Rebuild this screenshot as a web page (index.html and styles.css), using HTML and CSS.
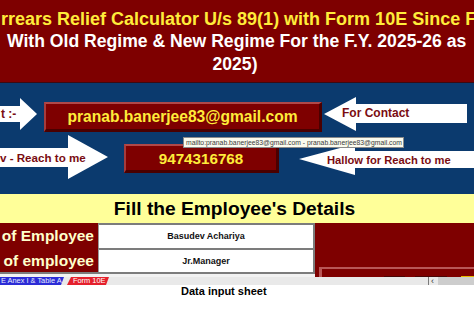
FILE: index.html
```html
<!DOCTYPE html>
<html>
<head>
<meta charset="utf-8">
<link rel="stylesheet" href="styles.css">
</head>
<body>
<div class="page">
  <header class="title">
    <div class="t1">rrears Relief Calculator U/s 89(1) with Form 10E Since F</div>
    <div class="t2">With Old Regime &amp; New Regime For the F.Y. 2025-26 as</div>
    <div class="t3">2025)</div>
  </header>
  <section class="contact">
    <div class="row row1">
      <div class="arrow a1"><span>t :-</span></div>
      <div class="box email">pranab.banerjee83@gmail.com</div>
      <div class="arrow a2"><span>For Contact</span></div>
    </div>
    <div class="row row2">
      <div class="arrow a3"><span>v - Reach to me</span></div>
      <div class="box phone">9474316768</div>
      <div class="arrow a4"><span>Hallow for Reach to me</span></div>
    </div>
    <div class="tooltip">mailto:pranab.banerjee83@gmail.com - pranab.banerjee83@gmail.com</div>
  </section>
  <div class="band">Fill the Employee's Details</div>
  <div class="grid">
    <div class="label">of Employee</div>
    <div class="cell">Basudev Achariya</div>
    <div class="side"><div class="side-box"><i class="blob dk"></i><i class="blob dk2"></i><i class="blob yl"></i></div></div>
    <div class="label">of employee</div>
    <div class="cell">Jr.Manager</div>
    <div class="blank"></div>
  </div>
  <div class="tabs">
    <span class="tab blue">E Anex I &amp; Table A</span>
    <span class="tab red">Form 10E</span>
    <span class="fill"></span>
    <span class="nav">&lsaquo;</span>
    <span class="track"></span>
  </div>
  <div class="caption">Data input sheet</div>
</div>
</body>
</html>
```

FILE: styles.css
```css
* { box-sizing: border-box; margin: 0; padding: 0; }
html, body { background: #ffffff; }
body { width: 474px; height: 312px; overflow: hidden; font-family: "Liberation Sans", Arial, sans-serif; }
.page { width: 474px; }

.title {
  height: 83px;
  background: #7e0000;
  border-bottom: 1px solid #3c0a12;
  font-weight: bold;
  padding-top: 8px;
  white-space: nowrap;
  overflow: hidden;
}
.t1 { color: #ffec3a; font-size: 18px; line-height: 22px; padding-left: 1px; }
.t2 { color: #ffffff; font-size: 17.6px; line-height: 23px; padding-left: 7px; }
.t3 { color: #ffffff; font-size: 17.6px; line-height: 23px; text-align: center; padding-right: 4px; }

.contact {
  position: relative;
  height: 111px;
  background: #0b3a6e;
  padding-top: 14px;
}
.row { display: flex; align-items: flex-start; }
.row1 { height: 35px; }
.row2 { height: 44px; margin-top: 3px; }

.arrow {
  background: #ffffff;
  display: flex;
  align-items: center;
  color: #7a0c12;
  font-weight: bold;
  white-space: nowrap;
}
.a1 {
  width: 37px; height: 32px; margin-top: 1px; font-size: 12px;
  clip-path: polygon(0 8px, 20px 8px, 20px 0, 37px 16px, 20px 32px, 20px 24px, 0 24px);
}
.a1 span { margin-left: 1px; }
.a2 {
  width: 143px; height: 34px; margin-left: 2px; font-size: 12px;
  clip-path: polygon(0 17px, 32px 0, 32px 7px, 143px 7px, 143px 26px, 32px 26px, 32px 34px);
}
.a2 span { margin-left: 18px; margin-top: -2px; }
.a3 {
  width: 108px; height: 44px; font-size: 11.6px;
  clip-path: polygon(0 13px, 68px 13px, 68px 0, 108px 22px, 68px 44px, 68px 32px, 0 32px);
}
.a4 {
  width: 175px; height: 31px; margin-left: 20px; margin-top: 9px; font-size: 11.2px;
  clip-path: polygon(0 15px, 56px 0, 56px 7px, 175px 7px, 175px 24px, 56px 24px, 56px 31px);
}
.a4 span { margin-left: 28px; }

.box {
  background: #7e0000;
  color: #ffec3a;
  font-weight: bold;
  display: flex;
  align-items: center;
  justify-content: center;
  border-style: solid;
  border-width: 2px 3px 3px 2px;
  border-color: #b04848 #4a0000 #4a0000 #a63c3c;
  white-space: nowrap;
}
.email { width: 278px; height: 30px; margin-left: 7px; margin-top: 5px; font-size: 15.6px; }
.phone { width: 155px; height: 29px; margin-left: 16px; margin-top: 9px; font-size: 15.2px; }

.tooltip {
  position: absolute;
  left: 183px;
  top: 54px;
  width: 221px;
  height: 11px;
  background: #fbfbee;
  border: 1px solid #8a8a8a;
  color: #3a3a3a;
  font-size: 6.8px;
  line-height: 9px;
  padding-left: 2px;
  white-space: nowrap;
  overflow: hidden;
}

.band {
  height: 29px;
  background: #ffff99;
  font-weight: bold;
  font-size: 19.2px;
  line-height: 30px;
  text-align: center;
  padding-right: 5px;
  color: #000;
}

.grid {
  display: grid;
  grid-template-columns: 98px 217px 159px;
  grid-template-rows: 25px 24px 5px;
  background: #7e0000;
}
.label {
  background: #7e0000;
  color: #ffffcc;
  font-weight: bold;
  font-size: 15.5px;
  text-align: right;
  padding-right: 4px;
  line-height: 25px;
  white-space: nowrap;
  overflow: hidden;
}
.cell {
  background: #ffffff;
  border-top: 2px solid #7c7c7c;
  border-left: 1px solid #9a9a9a;
  border-right: 2px solid #7c7c7c;
  font-weight: bold;
  font-size: 9px;
  text-align: center;
  line-height: 22px;
  color: #111;
}
.side {
  grid-column: 3;
  grid-row: 1 / 4;
  background: #7e0000;
  padding: 44px 0 0 4px;
  overflow: hidden;
}
.side-box {
  height: 12px;
  border-top: 2px solid #b85656;
  border-left: 3px solid #b85656;
  display: flex;
  align-items: flex-end;
  padding-left: 62px;
}
.blob { display: block; height: 3px; }
.dk { width: 22px; background: #4a0606; }
.dk2 { width: 34px; margin-left: 10px; background: #4a0606; }
.yl { width: 14px; margin-left: 14px; background: #e8b800; }
.blank {
  grid-column: 1 / 3;
  grid-row: 3;
  background: #f2f2f2;
  border-top: 2px solid #7c7c7c;
}

.tabs {
  height: 8px;
  display: flex;
  background: #e9e9e9;
  font-size: 7.4px;
  line-height: 8px;
  white-space: nowrap;
}
.tab { color: #ffffff; height: 8px; display: block; }
.blue {
  width: 64px;
  background: #2c2cd6;
  padding-left: 1px;
  color: #e8ecff;
  clip-path: polygon(0 0, 64px 0, 61px 8px, 0 8px);
}
.red {
  width: 43px;
  margin-left: 2px;
  background: #e4202c;
  padding-left: 7px;
  clip-path: polygon(5px 0, 43px 0, 40px 8px, 1px 8px);
}
.fill { flex: 1; }
.nav {
  width: 10px;
  border-left: 1px solid #7a7a7a;
  color: #333;
  font-size: 9px;
  line-height: 8px;
  padding-left: 2px;
  overflow: hidden;
}
.track { width: 36px; background: #cdcdcd; }

.caption {
  padding-left: 181px;
  font-weight: bold;
  font-size: 11px;
  line-height: 13px;
  color: #000;
}
```
